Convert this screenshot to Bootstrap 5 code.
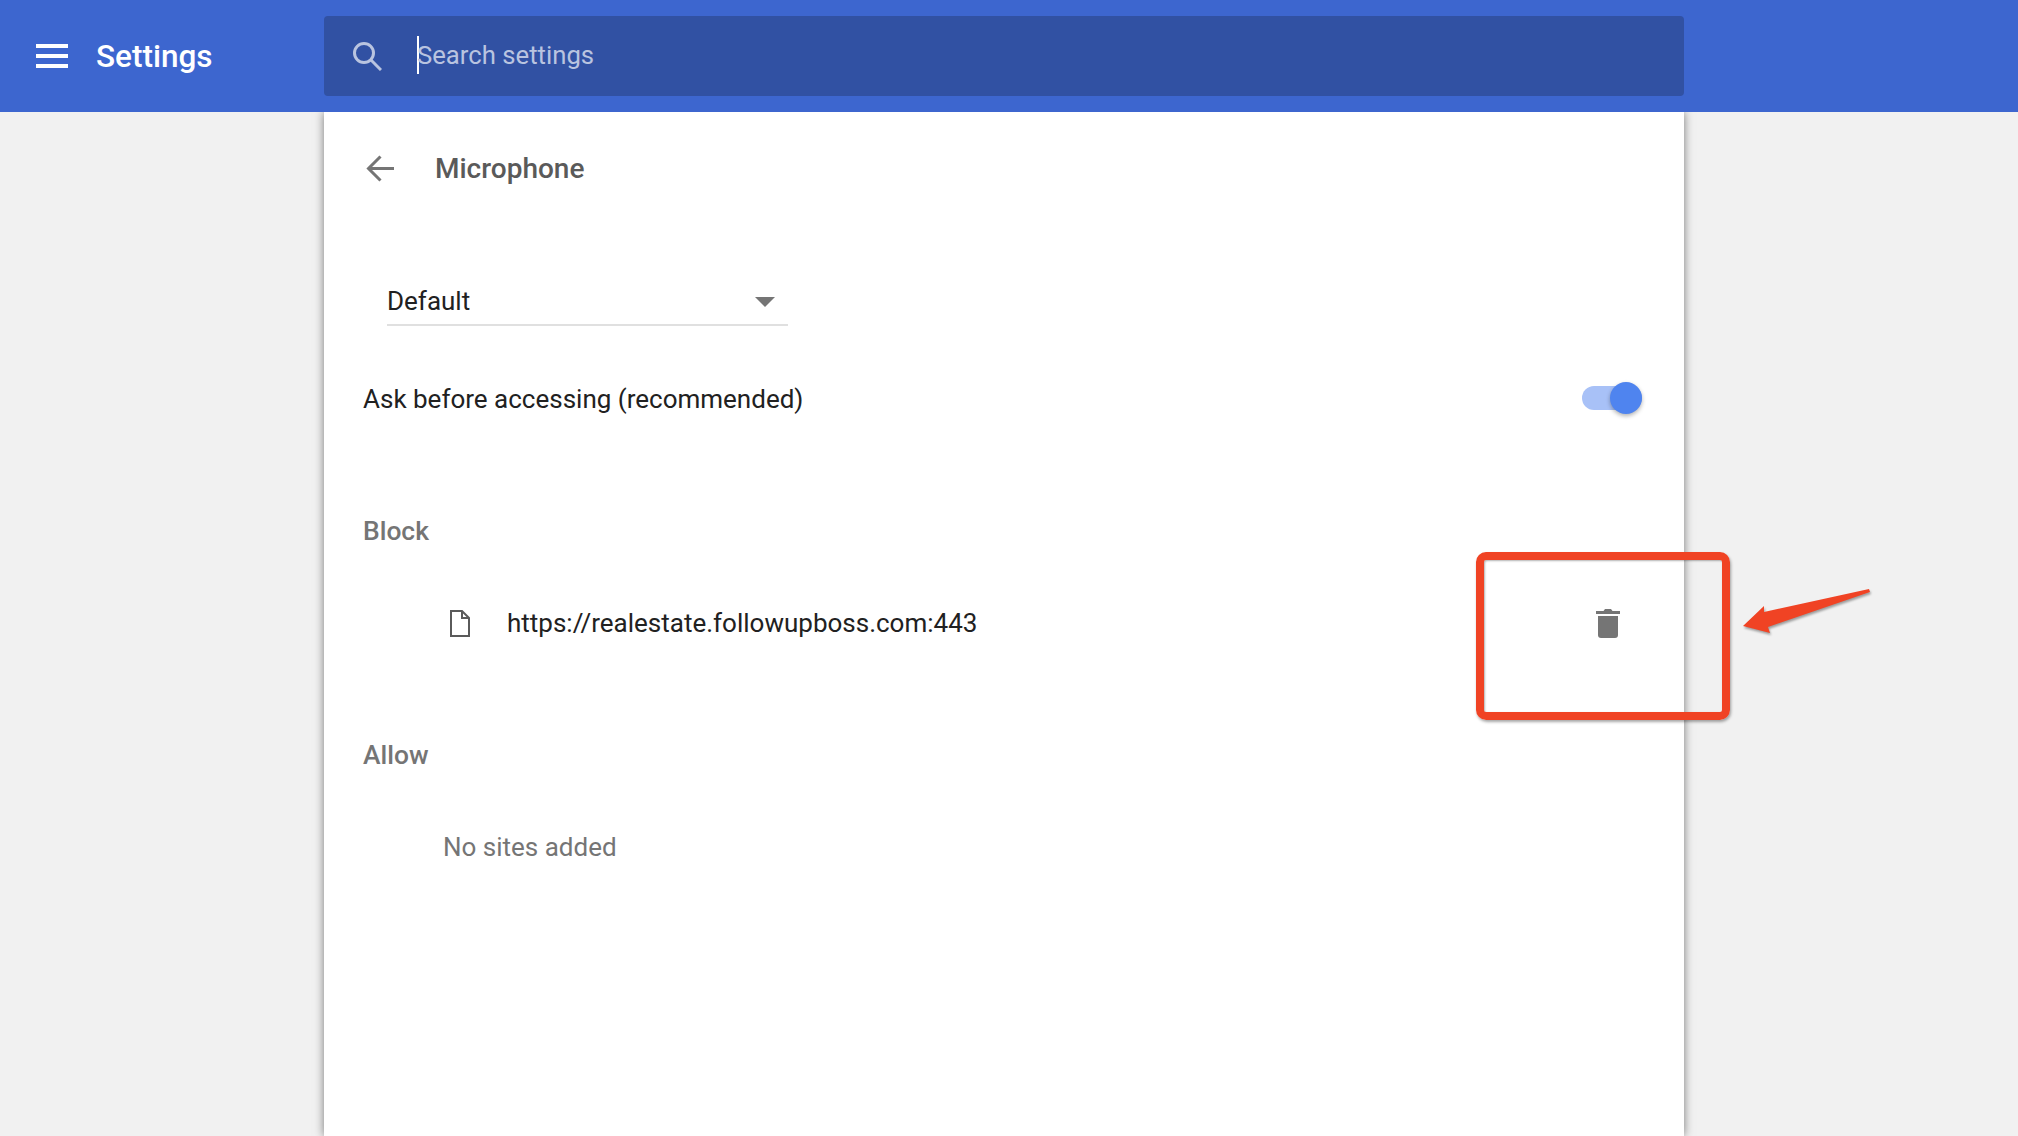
<!DOCTYPE html>
<html lang="en">
<head>
<meta charset="utf-8" />
<title>Settings - Microphone</title>
<link href="https://cdn.jsdelivr.net/npm/bootstrap@5.3.3/dist/css/bootstrap.min.css" rel="stylesheet" />
<style>
  html, body { height: 100%; }
  body { background: #f1f1f1; font-family: Roboto, "Liberation Sans", sans-serif; overflow: hidden; color: #212121; }
  .top-bar { height: 112px; background: #3d66cf; position: relative; z-index: 1; }
  .menu-btn { width: 96px; padding-left: 36px; }
  .top-title { width: 228px; color: #fff; font-size: 31.5px; font-weight: 500; line-height: 1; padding-top: 2px; }
  .search-box { width: 1360px; height: 80px; background: #3151a3; border-radius: 4px; padding-left: 28px; }
  .search-text { color: #b9c4e0; font-size: 25.7px; border-left: 2px solid #fff; line-height: 38px; margin-left: 35px; margin-top: -2px; }
  .search-text span { margin-left: -2px; }
  .sheet { width: 1360px; margin-left: 324px; height: 1024px; background: #fff; box-shadow: 0 0 9px rgba(0,0,0,.5); }
  .sub-head { height: 112px; padding-left: 42px; }
  .sub-title { margin-left: 41px; margin-top: 1px; font-size: 28px; font-weight: 500; color: #5a5a5a; }
  .mic-select { width: 401px; height: 65px; margin: 37px 0 0 63px; border-bottom: 2px solid #e0e0e0; font-size: 26px; padding-right: 13px; padding-top: 18px; }
  .ask-row { height: 122px; padding: 0 42px 0 39px; font-size: 26px; margin-top: 12px; }
  .toggle-track { width: 60px; height: 24px; border-radius: 12px; background: #a8c1f7; position: relative; margin-top: -2px; }
  .toggle-knob { position: absolute; right: 0; top: -4px; width: 32px; height: 32px; border-radius: 50%; background: #4f84ef; box-shadow: 0 2px 4px rgba(0,0,0,.3); }
  .group-label { padding-left: 39px; font-size: 26.4px; font-weight: 500; color: #757575; line-height: 30px; }
  .block-label { margin-top: 56px; }
  .allow-label { margin-top: 59px; }
  .site-row { height: 116px; padding: 0 64px 0 126px; margin-top: 19px; font-size: 26px; }
  .site-name { margin-left: 37px; }
  .no-sites { padding-left: 119px; margin-top: 62px; font-size: 26px; color: #757575; line-height: 30px; }
  .mark-box { position: absolute; left: 1476px; top: 552px; width: 254px; height: 168px; border: 8px solid #f04324; border-radius: 10px; box-shadow: 1px 2px 3px rgba(0,0,0,.35), inset 1px 1px 2px rgba(0,0,0,.3); }
  .mark-arrow { position: absolute; left: 1735px; top: 580px; filter: drop-shadow(1px 2px 1px rgba(0,0,0,.35)); }
</style>
</head>
<body>
  <header class="top-bar d-flex align-items-center">
    <div class="menu-btn">
      <svg class="d-block" width="32" height="24" viewBox="0 0 32 24" fill="#fff"><rect width="32" height="4"/><rect y="10" width="32" height="4"/><rect y="20" width="32" height="4"/></svg>
    </div>
    <div class="top-title">Settings</div>
    <div class="search-box d-flex align-items-center">
      <svg width="30" height="30" viewBox="0 0 30 30" fill="none" stroke="#b9c4e0" stroke-width="3"><circle cx="12" cy="12" r="9.5"/><path d="M19 19l10 10"/></svg>
      <div class="search-text"><span>Search settings</span></div>
    </div>
  </header>

  <main class="sheet">
    <div class="sub-head d-flex align-items-center">
      <svg width="28" height="27" viewBox="0 0 28 27" fill="none" stroke="#757575" stroke-width="3"><path d="M28 13.5H3M14.500 1.500L2.500 13.500l12 12"/></svg>
      <div class="sub-title">Microphone</div>
    </div>

    <div class="mic-select d-flex align-items-center justify-content-between">
      <span>Default</span>
      <svg width="20" height="10" viewBox="0 0 20 10" fill="#757575"><path d="M0 0h20L10 10z"/></svg>
    </div>

    <div class="ask-row d-flex align-items-center justify-content-between">
      <span>Ask before accessing (recommended)</span>
      <div class="toggle-track"><div class="toggle-knob"></div></div>
    </div>

    <div class="group-label block-label">Block</div>
    <div class="site-row d-flex align-items-center">
      <svg width="20" height="27" viewBox="0 0 20 27" fill="none" stroke="#5a5a5a" stroke-width="2"><path d="M1 1h11l7 7v18H1zM12 1v7h7"/></svg>
      <span class="site-name flex-grow-1">https://realestate.followupboss.com:443</span>
      <svg width="24" height="30" viewBox="0 0 24 30" fill="#757575"><path d="M0 3h7.500L9 1h6l1.500 2H24v3H0z"/><path d="M2 8h20v19a3 3 0 0 1-3 3H5a3 3 0 0 1-3-3z"/></svg>
    </div>

    <div class="group-label allow-label">Allow</div>
    <div class="no-sites">No sites added</div>
  </main>

  <div class="mark-box"></div>
  <svg class="mark-arrow" width="140" height="60" viewBox="0 0 140 60" fill="#f04324"><path d="M134 9L135 12L33 47L35 53L8 46L29 26L29 32z"/></svg>

  <script src="https://cdn.jsdelivr.net/npm/bootstrap@5.3.3/dist/js/bootstrap.bundle.min.js"></script>
</body>
</html>
